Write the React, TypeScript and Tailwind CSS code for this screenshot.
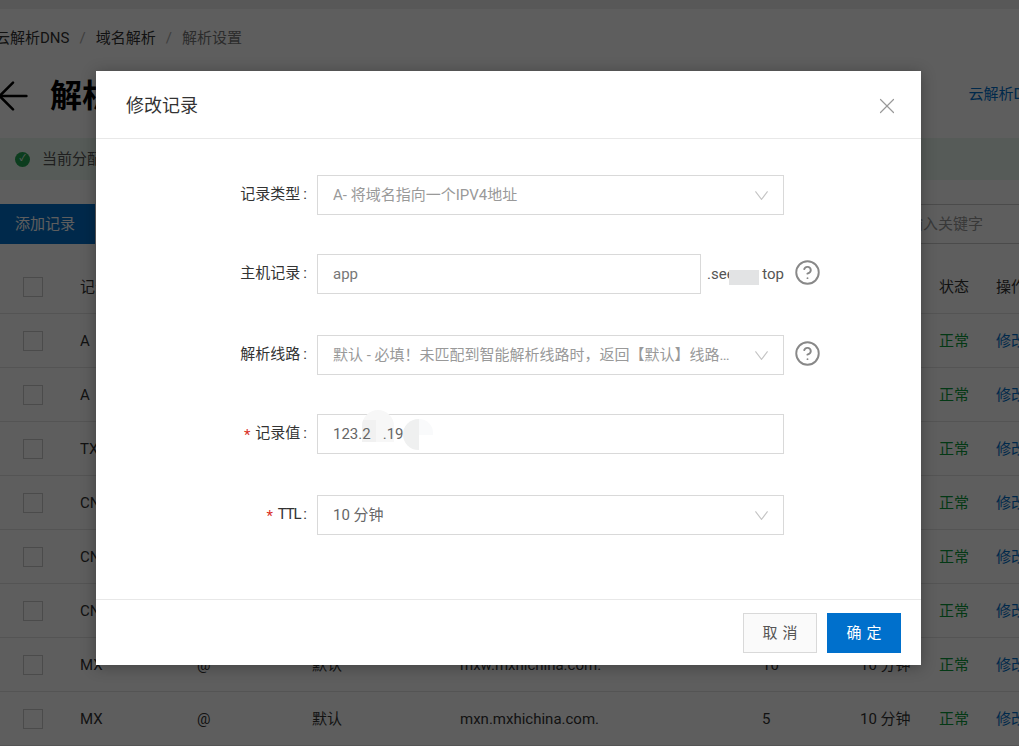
import React from 'react';
import { X, CircleHelp, ArrowLeft } from 'lucide-react';

const rows = [
    { type: 'A', host: '', line: '', value: '', mx: '', ttl: '' },
    { type: 'A', host: '', line: '', value: '', mx: '', ttl: '' },
    { type: 'TXT', host: '', line: '', value: '', mx: '', ttl: '' },
    { type: 'CNAME', host: '', line: '', value: '', mx: '', ttl: '' },
    { type: 'CNAME', host: '', line: '', value: '', mx: '', ttl: '' },
    { type: 'CNAME', host: '', line: '', value: '', mx: '', ttl: '' },
    { type: 'MX', host: '@', line: '默认', value: 'mxw.mxhichina.com.', mx: '10', ttl: '10 分钟' },
    { type: 'MX', host: '@', line: '默认', value: 'mxn.mxhichina.com.', mx: '5', ttl: '10 分钟' },
];

const rowGrid = 'grid grid-cols-[80px_117px_115px_148px_302px_98px_79px_57px_1fr] items-center pt-[1px]';

function RecordTable() {
    return (
        <div className="mt-4 text-[15px] text-[#333]">
            <div className={`${rowGrid} h-[54px] border-b border-[#e5e5e5]`}>
                <span className="ml-[23px] h-5 w-5 border border-[#ccc] bg-white" />
                <span>记录类型</span>
                <span />
                <span />
                <span />
                <span />
                <span />
                <span className="whitespace-nowrap">状态</span>
                <span className="whitespace-nowrap">操作</span>
            </div>
            {rows.map((row, i) => (
                <div key={i} className={`${rowGrid} h-[54px] border-b border-[#e5e5e5]`}>
                    <span className="ml-[23px] h-5 w-5 border border-[#ccc] bg-white" />
                    <span>{row.type}</span>
                    <span>{row.host}</span>
                    <span>{row.line}</span>
                    <span>{row.value}</span>
                    <span>{row.mx}</span>
                    <span className="whitespace-nowrap">{row.ttl}</span>
                    <span className="whitespace-nowrap text-[#0a9a3a]">正常</span>
                    <span className="whitespace-nowrap text-[#0070cc]">修改</span>
                </div>
            ))}
        </div>
    );
}

function Background() {
    return (
        <div className="h-[746px] overflow-hidden bg-white">
            <div className="h-[9px] bg-[#eee]" />
            <div className="mt-[19px] flex h-5 items-center gap-[10px] whitespace-nowrap text-[15px] text-[#333]">
                <span className="-ml-[5px]">云解析DNS</span>
                <span className="text-[#aaa]">/</span>
                <span>域名解析</span>
                <span className="text-[#aaa]">/</span>
                <span className="text-[#777]">解析设置</span>
            </div>
            <div className="mt-[28px] flex h-10 items-center">
                <ArrowLeft className="-ml-[10px] h-[46px] w-[46px] shrink-0 text-black" strokeWidth={1.3} />
                <span className="ml-[14px] text-[32px] font-bold text-black">解析设置</span>
                <span className="mb-1 ml-auto mr-[-24px] whitespace-nowrap text-[15px] text-[#0070cc]">云解析DNS</span>
            </div>
            <div className="mt-[22px] flex h-[42px] items-center bg-[#e9f7ee] pl-[15px] text-[15px] text-[#555]">
                <span className="flex h-[15px] w-[15px] items-center justify-center rounded-full bg-[#22a651] text-[9px] text-white">✓</span>
                <span className="ml-3">当前分配的DNS服务器</span>
            </div>
            <div className="mt-6 flex h-10 items-center justify-between">
                <span className="flex h-10 w-[95px] items-center bg-[#0070cc] pl-[15px] text-[15px] text-white">添加记录</span>
                <span className="flex h-10 w-[131px] items-center whitespace-nowrap border-y border-[#ccc] pl-[5px] text-[15px] text-[#999]">请输入关键字</span>
            </div>
            <RecordTable />
        </div>
    );
}

function FieldLabel({ required, children }: { required?: boolean; children: React.ReactNode }) {
    return (
        <label className="flex w-[221px] shrink-0 items-center justify-end whitespace-nowrap pb-[2px] pr-[10px] text-[15px] text-[#333]">
            {required && <span className="mr-[5px] translate-y-[2px] text-[#d93026]">*</span>}
            {children}<span className="ml-[3px]">:</span>
        </label>
    );
}

function SelectArrow() {
    return (
        <svg width="13" height="9" viewBox="0 0 13 9" fill="none" className="shrink-0">
            <path d="M0.4 0.4 L6.5 8.4 L12.6 0.4" stroke="#c4c4c4" strokeWidth="1.1" />
        </svg>
    );
}

function SelectBox({ children }: { children: React.ReactNode }) {
    return (
        <div className="flex h-10 w-[467px] items-center border border-[#d9d9d9] bg-white pl-[15px] pr-[15px] text-[15px] text-[#999]">
            <span className="flex-1 truncate pr-[18px]">{children}</span>
            <SelectArrow />
        </div>
    );
}

function EditDialog() {
    return (
        <div className="absolute left-[96px] top-[71px] flex h-[594px] w-[825px] flex-col bg-white shadow-[0_2px_14px_rgba(0,0,0,0.3)]">
            <div className="flex h-[68px] items-center justify-between border-b border-[#e8e8e8] pl-[30px] pr-[21px] pt-[3px]">
                <span className="text-lg text-[#333]">修改记录</span>
                <X className="h-[26px] w-[26px] text-[#999]" strokeWidth={1.1} />
            </div>
            <div className="flex-1 pt-[36px]">
                <div className="flex items-center">
                    <FieldLabel>记录类型</FieldLabel>
                    <SelectBox>A- 将域名指向一个IPV4地址</SelectBox>
                </div>
                <div className="mt-[39px] flex items-center">
                    <FieldLabel>主机记录</FieldLabel>
                    <div className="flex h-10 w-[384px] items-center border border-[#d9d9d9] pl-[15px] pt-[1px] text-[15px] text-[#777]">app</div>
                    <span className="relative ml-[6px] flex h-5 w-[77px] items-center justify-between text-[15px] leading-5 text-[#555]">
                        <span>.see</span>
                        <span className="absolute left-[22px] top-[6px] h-[15px] w-[30px] bg-[#e2e3e4]" />
                        <span>top</span>
                    </span>
                    <CircleHelp className="mb-1 ml-[10px] h-[27px] w-[27px] text-[#888]" strokeWidth={1.7} />
                </div>
                <div className="mt-[41px] flex items-center">
                    <FieldLabel>解析线路</FieldLabel>
                    <SelectBox>默认 - 必填！未匹配到智能解析线路时，返回【默认】线路设置结果</SelectBox>
                    <CircleHelp className="mb-1 ml-[10px] h-[27px] w-[27px] text-[#888]" strokeWidth={1.7} />
                </div>
                <div className="mt-[39px] flex items-center">
                    <FieldLabel required>记录值</FieldLabel>
                    <div className="relative flex h-10 w-[467px] items-center border border-[#d9d9d9] pl-[15px] text-[15px] text-[#666]">
                        <span className="relative z-10">123.2</span>
                        <span className="absolute left-[44px] top-[-5px] flex h-[32px] w-[32px] overflow-hidden rounded-t-full bg-[#f7f7f7]">
                            <span className="mt-[10px] w-[14px] bg-[#f1f1f1]" />
                        </span>
                        <span className="relative z-10 ml-[12px]">.19</span>
                        <span className="absolute left-[85px] top-[4px] flex items-start">
                            <span className="h-[31px] w-[16px] rounded-l-full bg-[#eff0f0]" />
                            <span className="h-[16px] w-[14px] rounded-tr-full bg-[#f9fafb]" />
                        </span>
                    </div>
                </div>
                <div className="mt-[41px] flex items-center">
                    <FieldLabel required><span className="tracking-[-1.2px]">TTL</span></FieldLabel>
                    <SelectBox><span className="text-[#666]">10 分钟</span></SelectBox>
                </div>
            </div>
            <div className="flex h-[66px] items-start justify-end gap-[10px] border-t border-[#e8e8e8] pr-[20px] pt-[13px]">
                <button className="h-10 w-[74px] border border-[#d9d9d9] bg-[#fafafa] pl-[5px] text-[15px] tracking-[5px] text-[#555]">取消</button>
                <button className="h-10 w-[74px] bg-[#0070cc] pl-[5px] text-[15px] tracking-[5px] text-white">确定</button>
            </div>
        </div>
    );
}

export default function App() {
    return (
        <div className="relative h-[746px] w-[1019px] overflow-hidden font-['Roboto','Noto_Sans_CJK_SC',sans-serif]">
            <Background />
            <div className="absolute inset-0 bg-black/[.63]" />
            <EditDialog />
        </div>
    );
}
